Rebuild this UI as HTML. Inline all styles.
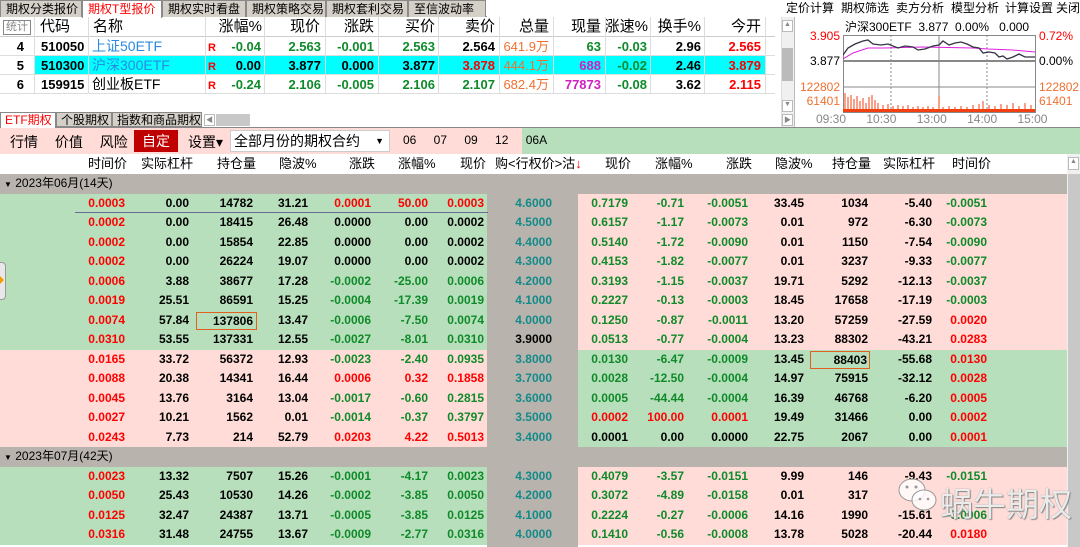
<!DOCTYPE html>
<html><head><meta charset="utf-8"><style>
*{margin:0;padding:0;box-sizing:border-box}
body{width:1080px;height:547px;overflow:hidden;background:#fff;position:relative;font-family:"Liberation Sans","Noto Sans CJK SC",sans-serif;font-size:12px;color:#000}
.a{position:absolute;white-space:nowrap}
.tab{position:absolute;top:0;height:17px;background:#d4d0c8;border:1px solid #8a8a8a;border-bottom:none;font-size:12px;line-height:16px;padding-left:5px;color:#000;white-space:nowrap;overflow:hidden}
.r{color:#f00}.g{color:#0f8a2a}.t{color:#138a8a}.k{color:#000}.o{color:#f07030}.m{color:#d020c0}
.th{position:absolute;top:17px;height:20px;font-size:15px;line-height:20px;white-space:nowrap}
.tr{position:absolute;left:0;width:775px;height:19px;font:bold 13px "Liberation Sans",sans-serif;line-height:19px;border-bottom:1px solid #ddd}
.tr span{position:absolute;text-align:right;white-space:nowrap}
.row{position:absolute;left:0;width:1067px;height:19.5px;font:bold 12px "Liberation Sans",sans-serif;line-height:19.5px}
.row span{position:absolute;width:70px;text-align:right}
.L{position:absolute;left:0;width:487px;height:100%}
.R{position:absolute;left:578px;width:489px;height:100%}
.G{background:#b7dfbb}.P{background:#ffdcd7}
.c1{left:55px}.c2{left:119px}.c3{left:183px}.c4{left:238px}.c5{left:301px}.c6{left:358px}.c7{left:414px}.c8{left:482px}
.c9{left:558px}.c10{left:614px}.c11{left:678px}.c12{left:734px}.c13{left:798px}.c14{left:862px}.c15{left:917px}
.hd{position:absolute;top:154px;font-size:13px;line-height:19px;white-space:nowrap}
.mb{position:absolute;left:0;width:1067px;height:19.5px;background:#b8b4ad;font-size:12px;line-height:19.5px;padding-left:4px}
.mn{position:absolute;top:0;font-size:12px;line-height:16px;white-space:nowrap}
</style></head><body>
<!-- top tabs -->
<div class="a" style="left:0;top:16px;width:487px;height:1px;background:#8a8a8a"></div>
<div class="tab" style="left:0;width:82px">期权分类报价</div>
<div class="tab" style="left:82px;width:80px;background:#fff;color:#f00;height:18px">期权T型报价</div>
<div class="tab" style="left:162px;width:84px">期权实时看盘</div>
<div class="tab" style="left:246px;width:80px">期权策略交易</div>
<div class="tab" style="left:326px;width:82px">期权套利交易</div>
<div class="tab" style="left:408px;width:78px">至信波动率</div>
<div class="mn" style="left:786px">定价计算</div>
<div class="mn" style="left:841px">期权筛选</div>
<div class="mn" style="left:896px">卖方分析</div>
<div class="mn" style="left:951px">模型分析</div>
<div class="mn" style="left:1005px">计算设置</div>
<div class="mn" style="left:1056px">关闭</div>
<!-- top table header -->
<div class="a" style="left:0;top:17px;width:775px;height:20px;border-bottom:1px solid #ccc"></div>
<div class="a" style="left:3px;top:20px;width:28px;height:15px;border:1px solid #888;font-size:11px;color:#888;line-height:13px;text-align:center">统计</div>
<div class="th" style="left:40px">代码</div>
<div class="th" style="left:93px">名称</div>
<div class="th" style="left:211px;width:51px;text-align:right">涨幅%</div>
<div class="th" style="left:280px;width:40px;text-align:right">现价</div>
<div class="th" style="left:334px;width:40px;text-align:right">涨跌</div>
<div class="th" style="left:395px;width:40px;text-align:right">买价</div>
<div class="th" style="left:455px;width:40px;text-align:right">卖价</div>
<div class="th" style="left:509px;width:40px;text-align:right">总量</div>
<div class="th" style="left:561px;width:40px;text-align:right">现量</div>
<div class="th" style="left:597px;width:51px;text-align:right">涨速%</div>
<div class="th" style="left:650px;width:51px;text-align:right">换手%</div>
<div class="th" style="left:721px;width:40px;text-align:right">今开</div>
<div class="tr" style="top:37px"><span style="left:0;width:24px">4</span><span style="left:41px">510050</span><span style="left:92px;color:#2a8ae0;font-weight:normal;font-size:14px">上证50ETF</span><span class="r" style="left:208px;font-size:11px;top:2px">R</span><span class="g" style="left:220px;width:41px">-0.04</span><span class="g" style="left:260px;width:61px">2.563</span><span class="g" style="left:310px;width:64px">-0.001</span><span class="g" style="left:370px;width:65px">2.563</span><span style="left:430px;width:65px">2.564</span><span class="o" style="left:490px;width:59px;font-weight:normal">641.9万</span><span class="g" style="left:550px;width:51px">63</span><span class="g" style="left:600px;width:47px">-0.03</span><span style="left:650px;width:51px">2.96</span><span class="r" style="left:700px;width:61px">2.565</span></div>
<div class="a" style="left:34px;top:56px;width:731px;height:19px;background:#00ffff"></div>
<div class="tr" style="top:56px"><span style="left:0;width:24px">5</span><span style="left:41px">510300</span><span style="left:92px;color:#2a8ae0;font-weight:normal;font-size:14px">沪深300ETF</span><span class="r" style="left:208px;font-size:11px;top:2px">R</span><span style="left:220px;width:41px">0.00</span><span style="left:260px;width:61px">3.877</span><span style="left:310px;width:64px">0.000</span><span style="left:370px;width:65px">3.877</span><span class="r" style="left:430px;width:65px">3.878</span><span class="o" style="left:490px;width:59px;font-weight:normal">444.1万</span><span class="m" style="left:550px;width:51px">688</span><span class="g" style="left:600px;width:47px">-0.02</span><span style="left:650px;width:51px">2.46</span><span class="r" style="left:700px;width:61px">3.879</span></div>
<div class="tr" style="top:75px"><span style="left:0;width:24px">6</span><span style="left:41px">159915</span><span style="left:92px;font-weight:normal;font-size:14px">创业板ETF</span><span class="r" style="left:208px;font-size:11px;top:2px">R</span><span class="g" style="left:220px;width:41px">-0.24</span><span class="g" style="left:260px;width:61px">2.106</span><span class="g" style="left:310px;width:64px">-0.005</span><span class="g" style="left:370px;width:65px">2.106</span><span class="g" style="left:430px;width:65px">2.107</span><span class="o" style="left:490px;width:59px;font-weight:normal">682.4万</span><span class="m" style="left:550px;width:51px">77873</span><span class="g" style="left:600px;width:47px">-0.08</span><span style="left:650px;width:51px">3.62</span><span class="r" style="left:700px;width:61px">2.115</span></div>
<!-- col lines -->
<div class="a" style="left:34px;top:17px;width:1px;height:77px;background:#ddd"></div>
<div class="a" style="left:88px;top:17px;width:1px;height:77px;background:#ddd"></div>
<div class="a" style="left:205px;top:17px;width:1px;height:77px;background:#ddd"></div>
<div class="a" style="left:264px;top:17px;width:1px;height:77px;background:#ddd"></div>
<div class="a" style="left:325px;top:17px;width:1px;height:77px;background:#ddd"></div>
<div class="a" style="left:378px;top:17px;width:1px;height:77px;background:#ddd"></div>
<div class="a" style="left:438px;top:17px;width:1px;height:77px;background:#ddd"></div>
<div class="a" style="left:499px;top:17px;width:1px;height:77px;background:#ddd"></div>
<div class="a" style="left:553px;top:17px;width:1px;height:77px;background:#ddd"></div>
<div class="a" style="left:605px;top:17px;width:1px;height:77px;background:#ddd"></div>
<div class="a" style="left:650px;top:17px;width:1px;height:77px;background:#ddd"></div>
<div class="a" style="left:704px;top:17px;width:1px;height:77px;background:#ddd"></div>
<div class="a" style="left:765px;top:17px;width:1px;height:77px;background:#ddd"></div>
<!-- scrollbar top -->
<div class="a" style="left:781px;top:17px;width:13px;height:111px;background:#f0f0f0;border-left:1px solid #ddd"></div>
<div class="a" style="left:782px;top:20px;width:11px;height:12px;border:1px solid #bbb;background:#fff;font-size:7px;text-align:center;color:#888">▲</div>
<div class="a" style="left:782px;top:48px;width:11px;height:33px;background:#bbb"></div>
<div class="a" style="left:782px;top:100px;width:11px;height:12px;border:1px solid #bbb;background:#fff;font-size:7px;text-align:center;color:#888">▼</div>
<div class="a" style="left:782px;top:114px;width:11px;height:12px;border:1px solid #bbb;background:#fff;font-size:7px;text-align:center;color:#888">▶</div>
<!-- chart -->
<div class="a" style="left:794px;top:17px;width:1px;height:111px;background:#bbb"></div>
<div class="a" style="left:845px;top:18px;font-size:12px">沪深300ETF&nbsp;&nbsp;3.877&nbsp;&nbsp;0.00%&nbsp;&nbsp;&nbsp;0.000</div>
<div class="a r" style="left:800px;top:29px;width:40px;text-align:right;font-size:12px">3.905</div>
<div class="a" style="left:800px;top:54px;width:40px;text-align:right;font-size:12px">3.877</div>
<div class="a o" style="left:795px;top:80px;width:45px;text-align:right;font-size:12px">122802</div>
<div class="a o" style="left:795px;top:94px;width:45px;text-align:right;font-size:12px">61401</div>
<div class="a r" style="left:1039px;top:29px;font-size:12px">0.72%</div>
<div class="a" style="left:1039px;top:54px;font-size:12px">0.00%</div>
<div class="a o" style="left:1039px;top:80px;font-size:12px">122802</div>
<div class="a o" style="left:1039px;top:94px;font-size:12px">61401</div>
<div class="a" style="left:816px;top:112px;font-size:12px;color:#888;word-spacing:17px">09:30 10:30 13:00 14:00 15:00</div>
<svg class="a" style="left:843px;top:35px" width="195" height="80">
<rect x="0.5" y="0.5" width="192" height="77" fill="none" stroke="#888"/>
<line x1="0" y1="26" x2="193" y2="26" stroke="#888" stroke-width="2"/>
<line x1="0" y1="52" x2="193" y2="52" stroke="#888"/>
<line x1="0" y1="77" x2="193" y2="77" stroke="#888"/>
<line x1="96" y1="0" x2="96" y2="77" stroke="#888"/>
<g stroke="#888" stroke-dasharray="2,2"><line x1="48" y1="0" x2="48" y2="77"/><line x1="144" y1="0" x2="144" y2="77"/></g>
<polyline fill="none" stroke="#e020e0" points="0,24 10,18 25,13 40,13 80,12 130,13 145,14 170,15 192,17"/>
<polyline fill="none" stroke="#334" stroke-width="1.3" points="0,20 5,13 12,9 20,6 25,5 30,9 38,10 45,9 55,13 62,11 70,12 75,15 82,14 90,11 96,10 100,6 106,10 112,8 118,7 124,9 130,12 136,13 140,18 146,17 152,18 156,22 160,21 164,24 170,22 176,19 182,22 188,22 192,22"/>
<g stroke="#f24010">
<path d="M2 77V58M5 77V62M8 77V60M11 77V64M14 77V61M17 77V66M20 77V63M23 77V68M26 77V62M29 77V60M32 77V65M35 77V68M40 77V70M45 77V69M50 77V71M55 77V70M60 77V71M65 77V70M70 77V72M75 77V71M80 77V72M85 77V71M90 77V72M96 77V61M100 77V72M106 77V71M112 77V72M118 77V71M124 77V72M130 77V70M136 77V69M140 77V66M146 77V70M152 77V71M158 77V69M164 77V70M170 77V68M176 77V71M182 77V68M188 77V70"/>
<rect x="0" y="74" width="192" height="3" fill="#f24010" stroke="none"/>
</g>
</svg>
<!-- bottom tabs -->
<div class="a" style="left:0;top:127px;width:1080px;height:1px;background:#888"></div>
<div class="a" style="left:0;top:112px;width:56px;height:16px;border:1px solid #888;border-bottom:none;color:#f00;font-size:12px;line-height:15px;padding-left:4px;background:#fff">ETF期权</div>
<div class="a" style="left:56px;top:112px;width:56px;height:15px;border:1px solid #888;background:#d4d0c8;font-size:12px;line-height:14px;padding-left:4px">个股期权</div>
<div class="a" style="left:112px;top:112px;width:90px;height:15px;border:1px solid #888;background:#d4d0c8;font-size:12px;line-height:14px;padding-left:4px">指数和商品期权</div>
<div class="a" style="left:204px;top:114px;width:11px;height:12px;border:1px solid #bbb;font-size:7px;color:#888;text-align:center">◀</div>
<div class="a" style="left:216px;top:114px;width:34px;height:12px;background:#c8c8c8"></div>
<!-- toolbar -->
<div class="a" style="left:0;top:128px;width:522px;height:26px;background:#ffdcd7"></div>
<div class="a" style="left:522px;top:128px;width:558px;height:26px;background:#b7dfbb"></div>
<div class="a" style="left:10px;top:132px;font-size:14px;word-spacing:13px">行情 价值 风险</div>
<div class="a" style="left:134px;top:130px;width:44px;height:22px;background:#c00000;color:#fff;font-size:14px;line-height:22px;text-align:center">自定</div>
<div class="a" style="left:188px;top:132px;font-size:14px">设置▾</div>
<div class="a" style="left:230px;top:130px;width:160px;height:22px;background:#fff;border:1px solid #ccc;font-size:14px;line-height:20px;padding-left:3px">全部月份的期权合约<span style="position:absolute;right:5px;font-size:9px">▼</span></div>
<div class="a" style="left:403px;top:133px;font-size:12px;word-spacing:14px">06 07 09 12 06A</div>
<!-- headers -->
<div class="a" style="left:0;top:154px;width:1067px;height:20px;background:#fff"></div>
<div class="hd" style="left:88px">时间价</div><div class="hd" style="left:141px">实际杠杆</div><div class="hd" style="left:217px">持仓量</div><div class="hd" style="left:279px">隐波%</div><div class="hd" style="left:349px">涨跌</div><div class="hd" style="left:398px">涨幅%</div><div class="hd" style="left:460px">现价</div><div class="hd" style="left:495px">购&lt;行权价&gt;沽<span style="color:#f00">↓</span></div>
<div class="hd" style="left:605px">现价</div><div class="hd" style="left:655px">涨幅%</div><div class="hd" style="left:726px">涨跌</div><div class="hd" style="left:775px">隐波%</div><div class="hd" style="left:832px">持仓量</div><div class="hd" style="left:883px">实际杠杆</div><div class="hd" style="left:952px">时间价</div>
<div class="a" style="left:1067px;top:154px;width:13px;height:393px;background:#f0f0f0"></div>
<div class="a" style="left:1068px;top:157px;width:11px;height:13px;border:1px solid #bbb;background:#fff;font-size:7px;color:#888;text-align:center">▲</div>
<div class="a" style="left:1068px;top:174px;width:12px;height:373px;background:#c8c8c8"></div>
<!-- month 1 -->
<div class="mb" style="top:174px"><span style="font-size:8px">▼</span> 2023年06月(14天)</div>
<div class="a" style="left:487px;top:193px;width:91px;height:354px;background:#b8b4ad"></div>

<div class="row" style="top:193.5px"><div class="L G"></div><div class="R P"></div><span class="c1 r">0.0003</span><span class="c2">0.00</span><span class="c3">14782</span><span class="c4">31.21</span><span class="c5 r">0.0001</span><span class="c6 r">50.00</span><span class="c7 r">0.0003</span><span class="c8 t">4.6000</span><span class="c9 g">0.7179</span><span class="c10 g">-0.71</span><span class="c11 g">-0.0051</span><span class="c12">33.45</span><span class="c13">1034</span><span class="c14">-5.40</span><span class="c15 g">-0.0051</span></div>
<div class="a" style="left:75px;top:212px;width:413px;height:1px;background:#6a6a9a"></div>
<div class="row" style="top:213px"><div class="L G"></div><div class="R P"></div><span class="c1 r">0.0002</span><span class="c2">0.00</span><span class="c3">18415</span><span class="c4">26.48</span><span class="c5">0.0000</span><span class="c6">0.00</span><span class="c7">0.0002</span><span class="c8 t">4.5000</span><span class="c9 g">0.6157</span><span class="c10 g">-1.17</span><span class="c11 g">-0.0073</span><span class="c12">0.01</span><span class="c13">972</span><span class="c14">-6.30</span><span class="c15 g">-0.0073</span></div>
<div class="row" style="top:232.5px"><div class="L G"></div><div class="R P"></div><span class="c1 r">0.0002</span><span class="c2">0.00</span><span class="c3">15854</span><span class="c4">22.85</span><span class="c5">0.0000</span><span class="c6">0.00</span><span class="c7">0.0002</span><span class="c8 t">4.4000</span><span class="c9 g">0.5140</span><span class="c10 g">-1.72</span><span class="c11 g">-0.0090</span><span class="c12">0.01</span><span class="c13">1150</span><span class="c14">-7.54</span><span class="c15 g">-0.0090</span></div>
<div class="row" style="top:252px"><div class="L G"></div><div class="R P"></div><span class="c1 r">0.0002</span><span class="c2">0.00</span><span class="c3">26224</span><span class="c4">19.07</span><span class="c5">0.0000</span><span class="c6">0.00</span><span class="c7">0.0002</span><span class="c8 t">4.3000</span><span class="c9 g">0.4153</span><span class="c10 g">-1.82</span><span class="c11 g">-0.0077</span><span class="c12">0.01</span><span class="c13">3237</span><span class="c14">-9.33</span><span class="c15 g">-0.0077</span></div>
<div class="row" style="top:271.5px"><div class="L G"></div><div class="R P"></div><span class="c1 r">0.0006</span><span class="c2">3.88</span><span class="c3">38677</span><span class="c4">17.28</span><span class="c5 g">-0.0002</span><span class="c6 g">-25.00</span><span class="c7 g">0.0006</span><span class="c8 t">4.2000</span><span class="c9 g">0.3193</span><span class="c10 g">-1.15</span><span class="c11 g">-0.0037</span><span class="c12">19.71</span><span class="c13">5292</span><span class="c14">-12.13</span><span class="c15 g">-0.0037</span></div>
<div class="row" style="top:291px"><div class="L G"></div><div class="R P"></div><span class="c1 r">0.0019</span><span class="c2">25.51</span><span class="c3">86591</span><span class="c4">15.25</span><span class="c5 g">-0.0004</span><span class="c6 g">-17.39</span><span class="c7 g">0.0019</span><span class="c8 t">4.1000</span><span class="c9 g">0.2227</span><span class="c10 g">-0.13</span><span class="c11 g">-0.0003</span><span class="c12">18.45</span><span class="c13">17658</span><span class="c14">-17.19</span><span class="c15 g">-0.0003</span></div>
<div class="row" style="top:310.5px"><div class="L G"></div><div class="R P"></div><span class="c1 r">0.0074</span><span class="c2">57.84</span><span class="c3" style="left:196px;width:61px;border:1px solid #e06020;height:18px;line-height:16px;top:1px;padding-right:3px">137806</span><span class="c4">13.47</span><span class="c5 g">-0.0006</span><span class="c6 g">-7.50</span><span class="c7 g">0.0074</span><span class="c8 t">4.0000</span><span class="c9 g">0.1250</span><span class="c10 g">-0.87</span><span class="c11 g">-0.0011</span><span class="c12">13.20</span><span class="c13">57259</span><span class="c14">-27.59</span><span class="c15 r">0.0020</span></div>
<div class="row" style="top:330px"><div class="L G"></div><div class="R P"></div><span class="c1 r">0.0310</span><span class="c2">53.55</span><span class="c3">137331</span><span class="c4">12.55</span><span class="c5 g">-0.0027</span><span class="c6 g">-8.01</span><span class="c7 g">0.0310</span><span class="c8">3.9000</span><span class="c9 g">0.0513</span><span class="c10 g">-0.77</span><span class="c11 g">-0.0004</span><span class="c12">13.23</span><span class="c13">88302</span><span class="c14">-43.21</span><span class="c15 r">0.0283</span></div>
<div class="row" style="top:349.5px"><div class="L P"></div><div class="R G"></div><span class="c1 r">0.0165</span><span class="c2">33.72</span><span class="c3">56372</span><span class="c4">12.93</span><span class="c5 g">-0.0023</span><span class="c6 g">-2.40</span><span class="c7 g">0.0935</span><span class="c8 t">3.8000</span><span class="c9 g">0.0130</span><span class="c10 g">-6.47</span><span class="c11 g">-0.0009</span><span class="c12">13.45</span><span class="c13" style="left:810px;width:60px;border:1px solid #e06020;height:18px;line-height:16px;top:1px;padding-right:2px">88403</span><span class="c14">-55.68</span><span class="c15 r">0.0130</span></div>
<div class="row" style="top:369px"><div class="L P"></div><div class="R G"></div><span class="c1 r">0.0088</span><span class="c2">20.38</span><span class="c3">14341</span><span class="c4">16.44</span><span class="c5 r">0.0006</span><span class="c6 r">0.32</span><span class="c7 r">0.1858</span><span class="c8 t">3.7000</span><span class="c9 g">0.0028</span><span class="c10 g">-12.50</span><span class="c11 g">-0.0004</span><span class="c12">14.97</span><span class="c13">75915</span><span class="c14">-32.12</span><span class="c15 r">0.0028</span></div>
<div class="row" style="top:388.5px"><div class="L P"></div><div class="R G"></div><span class="c1 r">0.0045</span><span class="c2">13.76</span><span class="c3">3164</span><span class="c4">13.04</span><span class="c5 g">-0.0017</span><span class="c6 g">-0.60</span><span class="c7 g">0.2815</span><span class="c8 t">3.6000</span><span class="c9 g">0.0005</span><span class="c10 g">-44.44</span><span class="c11 g">-0.0004</span><span class="c12">16.39</span><span class="c13">46768</span><span class="c14">-6.20</span><span class="c15 r">0.0005</span></div>
<div class="row" style="top:408px"><div class="L P"></div><div class="R G"></div><span class="c1 r">0.0027</span><span class="c2">10.21</span><span class="c3">1562</span><span class="c4">0.01</span><span class="c5 g">-0.0014</span><span class="c6 g">-0.37</span><span class="c7 g">0.3797</span><span class="c8 t">3.5000</span><span class="c9 r">0.0002</span><span class="c10 r">100.00</span><span class="c11 r">0.0001</span><span class="c12">19.49</span><span class="c13">31466</span><span class="c14">0.00</span><span class="c15 r">0.0002</span></div>
<div class="row" style="top:427.5px"><div class="L P"></div><div class="R G"></div><span class="c1 r">0.0243</span><span class="c2">7.73</span><span class="c3">214</span><span class="c4">52.79</span><span class="c5 r">0.0203</span><span class="c6 r">4.22</span><span class="c7 r">0.5013</span><span class="c8 t">3.4000</span><span class="c9">0.0001</span><span class="c10">0.00</span><span class="c11">0.0000</span><span class="c12">22.75</span><span class="c13">2067</span><span class="c14">0.00</span><span class="c15 r">0.0001</span></div>
<!-- month 2 -->
<div class="mb" style="top:447px"><span style="font-size:8px">▼</span> 2023年07月(42天)</div>
<div class="row" style="top:466.5px"><div class="L G"></div><div class="R P"></div><span class="c1 r">0.0023</span><span class="c2">13.32</span><span class="c3">7507</span><span class="c4">15.26</span><span class="c5 g">-0.0001</span><span class="c6 g">-4.17</span><span class="c7 g">0.0023</span><span class="c8 t">4.3000</span><span class="c9 g">0.4079</span><span class="c10 g">-3.57</span><span class="c11 g">-0.0151</span><span class="c12">9.99</span><span class="c13">146</span><span class="c14">-9.43</span><span class="c15 g">-0.0151</span></div>
<div class="row" style="top:486px"><div class="L G"></div><div class="R P"></div><span class="c1 r">0.0050</span><span class="c2">25.43</span><span class="c3">10530</span><span class="c4">14.26</span><span class="c5 g">-0.0002</span><span class="c6 g">-3.85</span><span class="c7 g">0.0050</span><span class="c8 t">4.2000</span><span class="c9 g">0.3072</span><span class="c10 g">-4.89</span><span class="c11 g">-0.0158</span><span class="c12">0.01</span><span class="c13">317</span></div>
<div class="row" style="top:505.5px"><div class="L G"></div><div class="R P"></div><span class="c1 r">0.0125</span><span class="c2">32.47</span><span class="c3">24387</span><span class="c4">13.71</span><span class="c5 g">-0.0005</span><span class="c6 g">-3.85</span><span class="c7 g">0.0125</span><span class="c8 t">4.1000</span><span class="c9 g">0.2224</span><span class="c10 g">-0.27</span><span class="c11 g">-0.0006</span><span class="c12">14.16</span><span class="c13">1990</span><span class="c14">-15.61</span><span class="c15 g">-0.0006</span></div>
<div class="row" style="top:525px"><div class="L G"></div><div class="R P"></div><span class="c1 r">0.0316</span><span class="c2">31.48</span><span class="c3">24755</span><span class="c4">13.67</span><span class="c5 g">-0.0009</span><span class="c6 g">-2.77</span><span class="c7 g">0.0316</span><span class="c8 t">4.0000</span><span class="c9 g">0.1410</span><span class="c10 g">-0.56</span><span class="c11 g">-0.0008</span><span class="c12">13.78</span><span class="c13">5028</span><span class="c14">-20.44</span><span class="c15 r">0.0180</span></div>
<!-- left marker -->
<div class="a" style="left:-4px;top:262px;width:10px;height:38px;border:1px solid #999;border-radius:4px;background:#e8e8e8"></div>
<div class="a" style="left:0;top:276px;width:0;height:0;border-left:4px solid #f0a000;border-top:4px solid transparent;border-bottom:4px solid transparent"></div>
<!-- watermark -->
<svg class="a" style="left:896px;top:472px" width="44" height="44"><g fill="rgba(255,255,255,0.8)" stroke="#999" stroke-width="1"><ellipse cx="16" cy="18" rx="13" ry="11"/><ellipse cx="28" cy="28" rx="12" ry="10"/></g><g fill="#999"><circle cx="11" cy="15" r="1.5"/><circle cx="20" cy="15" r="1.5"/><circle cx="24" cy="27" r="1.3"/><circle cx="32" cy="27" r="1.3"/></g></svg>
<div class="a" style="left:940px;top:478px;font-size:33px;color:rgba(255,255,255,0.85);text-shadow:0 0 1px #777,1px 1px 1px #888;font-family:'Noto Sans CJK SC',sans-serif">蜗牛期权</div>
</body></html>
